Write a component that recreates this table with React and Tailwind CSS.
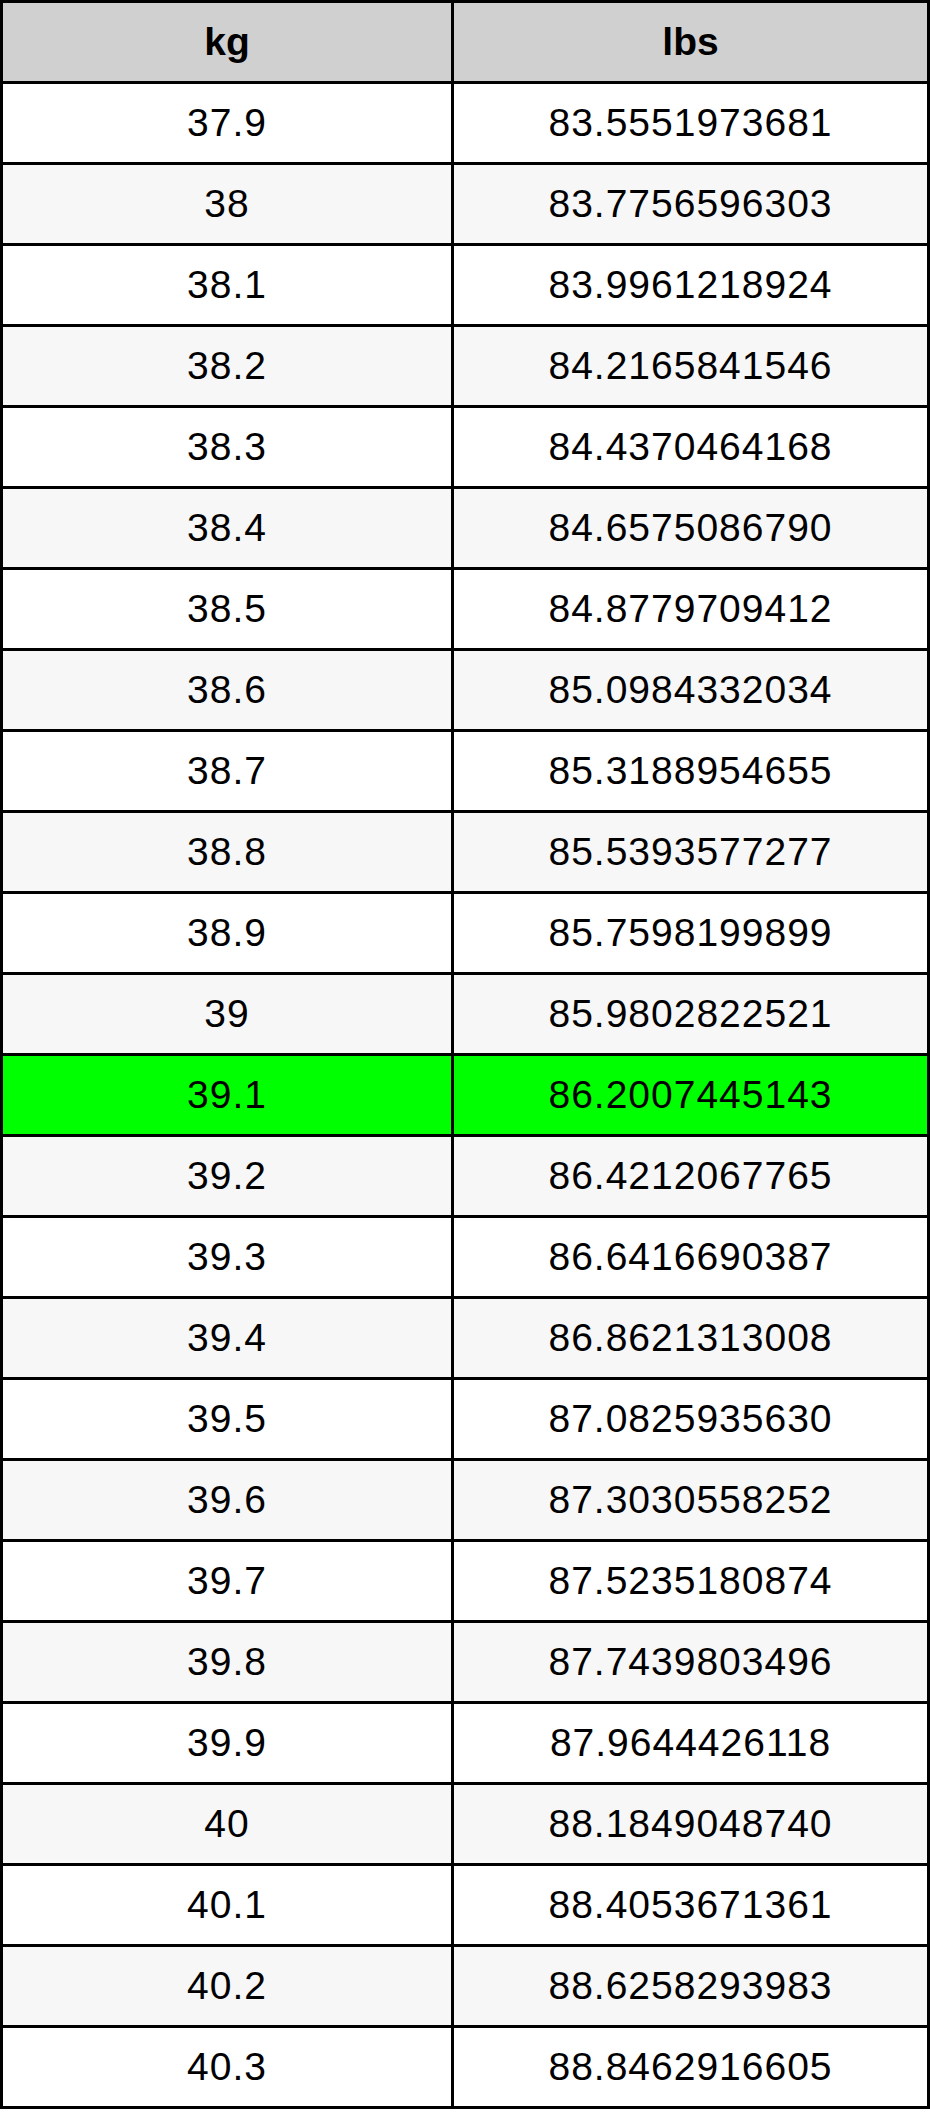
const rows = [
  ['37.9', '83.5551973681'],
  ['38', '83.7756596303'],
  ['38.1', '83.9961218924'],
  ['38.2', '84.2165841546'],
  ['38.3', '84.4370464168'],
  ['38.4', '84.6575086790'],
  ['38.5', '84.8779709412'],
  ['38.6', '85.0984332034'],
  ['38.7', '85.3188954655'],
  ['38.8', '85.5393577277'],
  ['38.9', '85.7598199899'],
  ['39', '85.9802822521'],
  ['39.1', '86.2007445143'],
  ['39.2', '86.4212067765'],
  ['39.3', '86.6416690387'],
  ['39.4', '86.8621313008'],
  ['39.5', '87.0825935630'],
  ['39.6', '87.3030558252'],
  ['39.7', '87.5235180874'],
  ['39.8', '87.7439803496'],
  ['39.9', '87.9644426118'],
  ['40', '88.1849048740'],
  ['40.1', '88.4053671361'],
  ['40.2', '88.6258293983'],
  ['40.3', '88.8462916605'],
];

const cell = 'h-[81px] flex items-center justify-center border-r-[3px] border-b-[3px] border-black';

export default function App() {
  return (
    <div className="w-[930px] bg-white text-black" style={{ fontFamily: '"Liberation Sans", Arial, sans-serif' }}>
      <div className="grid grid-cols-[451px_476px] border-l-[3px] border-t-[3px] border-black text-[39px]">
        <div className={`${cell} bg-[#d0d0d0] font-bold`}>kg</div>
        <div className={`${cell} bg-[#d0d0d0] font-bold`}>lbs</div>
        {rows.map(([kg, lbs], i) => {
          const bg = kg === '39.1' ? 'bg-[#00ff00]' : i % 2 === 0 ? 'bg-white' : 'bg-[#f7f7f7]';
          return [
            <div key={kg + 'a'} className={`${cell} ${bg} tracking-[1px]`}>{kg}</div>,
            <div key={kg + 'b'} className={`${cell} ${bg} tracking-[1px]`}>{lbs}</div>,
          ];
        })}
      </div>
    </div>
  );
}
